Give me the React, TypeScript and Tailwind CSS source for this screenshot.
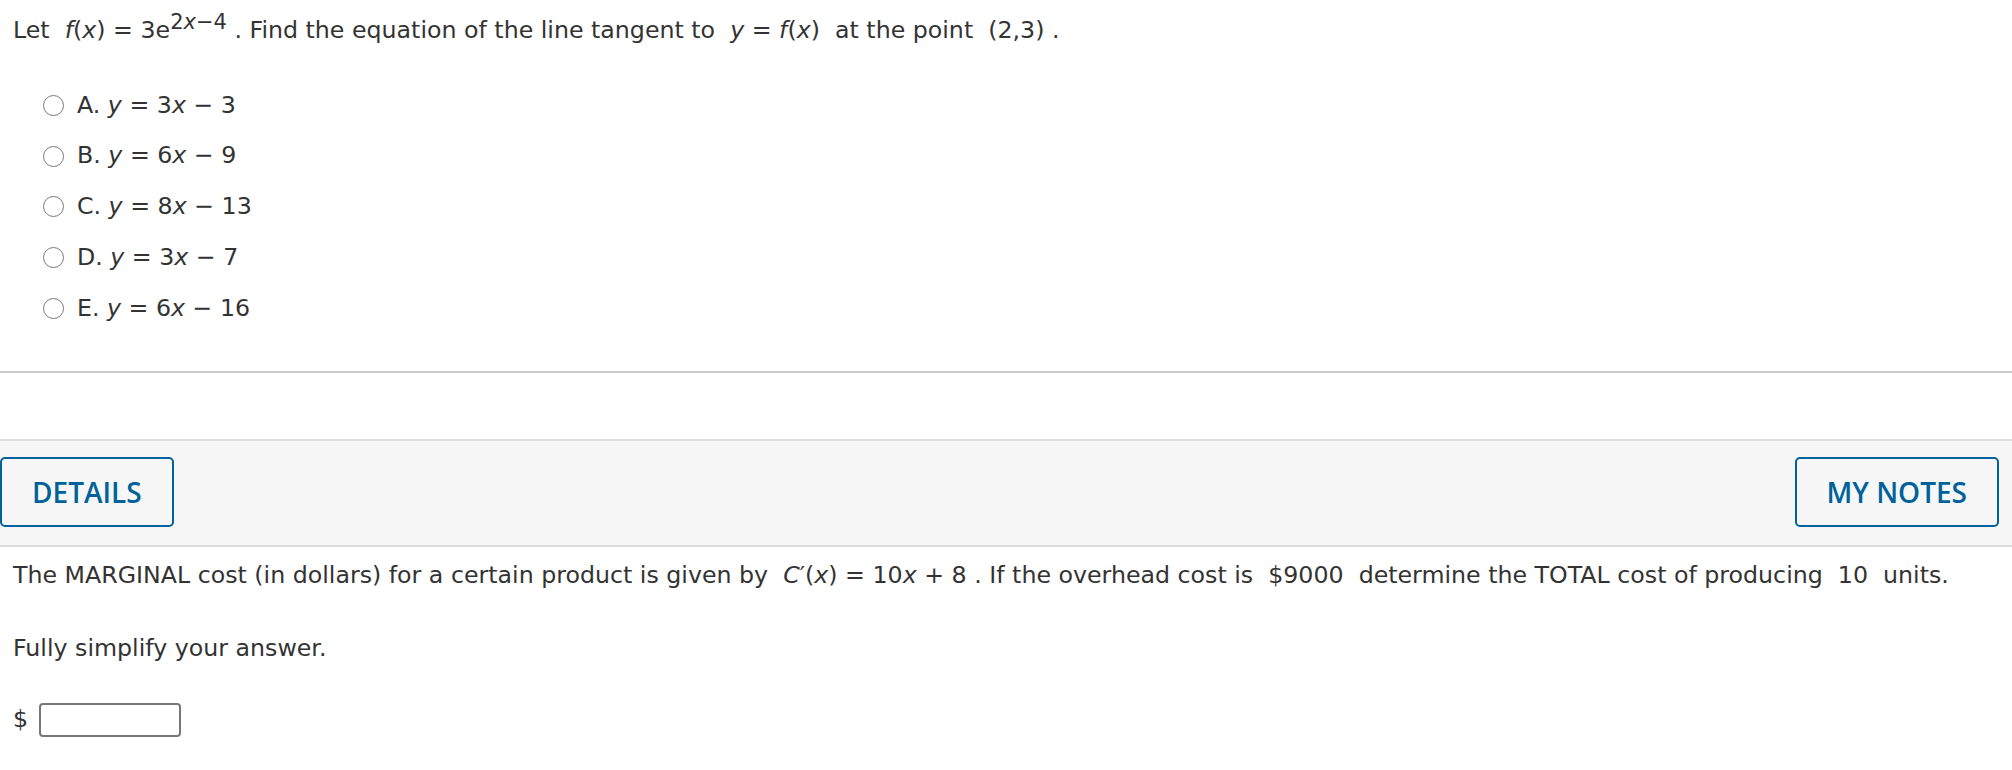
import React from 'react';

const options = [
  { k: 'A', m: '3', b: '3' },
  { k: 'B', m: '6', b: '9' },
  { k: 'C', m: '8', b: '13' },
  { k: 'D', m: '3', b: '7' },
  { k: 'E', m: '6', b: '16' },
];

function Radio() {
  return <span className="inline-block h-[21px] w-[21px] shrink-0 rounded-full border-[1.5px] border-[#777] bg-white" />;
}

function NavButton({ children }: { children: React.ReactNode }) {
  return (
    <button
      className="flex h-[70px] items-center rounded-[5px] border-2 border-[#00629b] bg-[#f7f7f7] px-[30px] text-[28px] font-semibold text-[#00629b]"
      style={{ fontFamily: '"Open Sans", sans-serif' }}
    >
      {children}
    </button>
  );
}

export default function App() {
  return (
    <div
      className="min-h-[770px] w-[2012px] bg-white text-[23.7px] text-[#333]"
      style={{ fontFamily: '"DejaVu Sans", Verdana, sans-serif' }}
    >
      <div className="px-[13px] pt-[10px]">
        <p className="h-[40px] whitespace-pre leading-[40px]">
          Let  <i>f</i>(<i>x</i>) = 3e
          <span className="relative -top-[9px] text-[21px]">
            2<i>x</i>−4
          </span>
          {' '}. Find the equation of the line tangent to  <i>y</i> = <i>f</i>(<i>x</i>)  at the point  (2,3) .
        </p>
      </div>

      <ul className="mt-[30px] pl-[43px]">
        {options.map((o) => (
          <li key={o.k} className="flex h-[50.75px] items-center gap-[13px] whitespace-pre">
            <Radio />
            <span>
              {o.k}. <i>y</i> = {o.m}<i>x</i> − {o.b}
            </span>
          </li>
        ))}
      </ul>

      <hr className="mt-[37px] border-t-2 border-[#ccc]" />

      <div className="mt-[66px] flex items-center justify-between border-y-2 border-[#ddd] bg-[#f7f7f7] pb-[18px] pr-[13px] pt-[16px]">
        <NavButton>DETAILS</NavButton>
        <NavButton>MY NOTES</NavButton>
      </div>

      <div className="px-[13px]">
        <p className="mt-[12px] h-[32px] whitespace-pre leading-[32px]">
          The MARGINAL cost (in dollars) for a certain product is given by  <i>C</i>′(<i>x</i>) = 10<i>x</i> + 8 . If the
          overhead cost is  $9000  determine the TOTAL cost of producing  10  units.
        </p>
        <p className="mt-[41px] h-[32px] leading-[32px]">Fully simplify your answer.</p>
        <div className="mt-[38px] flex items-center gap-[11px]">
          <span>$</span>
          <input className="h-[34px] w-[142px] rounded-[4px] border-2 border-[#777] bg-white" />
        </div>
      </div>
    </div>
  );
}
